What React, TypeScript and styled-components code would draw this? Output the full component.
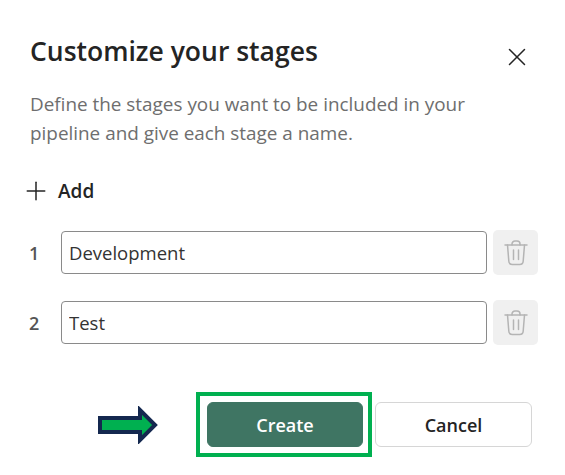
import styled, { createGlobalStyle } from "styled-components";
import { Plus, X } from "lucide-react";

const stages = [
  { id: 1, name: "Development" },
  { id: 2, name: "Test" },
];

const GlobalStyle = createGlobalStyle`
  html, body {
    margin: 0;
    padding: 0;
    background: #fff;
  }
  body {
    font-family: "Open Sans", "Noto Sans", "Liberation Sans", sans-serif;
  }
`;

const TrashIcon = () => (
  <svg width="24" height="26" viewBox="0 0 24 26" fill="none" stroke="#b4b4b4" strokeWidth="1.5" strokeLinecap="round" strokeLinejoin="round">
    <path d="M1 5h22" />
    <path d="M8 5V4a3 3 0 0 1 3-3h2a3 3 0 0 1 3 3v1" />
    <path d="M3.500 5l1.300 16a3.600 3.600 0 0 0 3.600 3.500h7.200a3.600 3.600 0 0 0 3.600-3.500L20.500 5" />
    <path d="M9.500 10v9.500M14.500 10v9.500" />
  </svg>
);

const App = () => {
  return (
    <Dialog>
      <GlobalStyle />
      <Header>
        <Title>Customize your stages</Title>
        <CloseButton aria-label="Close">
          <X size={30} strokeWidth={1.5} absoluteStrokeWidth />
        </CloseButton>
      </Header>
      <Description>
        Define the stages you want to be included in your pipeline and give each stage a name.
      </Description>
      <AddButton>
        <Plus size={30} strokeWidth={1.5} absoluteStrokeWidth />
        <span>Add</span>
      </AddButton>
      <StageList>
        {stages.map((stage) => (
          <StageRow key={stage.id}>
            <StageNumber>{stage.id}</StageNumber>
            <StageInput defaultValue={stage.name} />
            <DeleteButton aria-label="Delete" disabled>
              <TrashIcon />
            </DeleteButton>
          </StageRow>
        ))}
      </StageList>
      <Footer>
        <Arrow width="62" height="38" viewBox="0 0 62 38">
          <path d="M2 12h40V4l15 15-15 15v-8H2z" fill="#00b050" stroke="#14284f" strokeWidth="4" />
        </Arrow>
        <Highlight>
          <ActionButton $primary>Create</ActionButton>
        </Highlight>
        <ActionButton>Cancel</ActionButton>
      </Footer>
    </Dialog>
  );
};

const Dialog = styled.div`
  width: 565px;
  height: 475px;
  box-sizing: border-box;
  padding: 33px 27px 0 30px;
  overflow: hidden;
  background: #fff;
`;

const Header = styled.div`
  display: flex;
  justify-content: space-between;
  align-items: flex-start;
`;

const Title = styled.h1`
  margin: 0;
  font-size: 26.5px;
  line-height: 36px;
  font-weight: 600;
  color: #242424;
`;

const CloseButton = styled.button`
  display: flex;
  margin: 9px 6px 0 0;
  padding: 0;
  border: none;
  background: none;
  color: #242424;
`;

const Description = styled.p`
  width: 470px;
  margin: 18px 0 0;
  font-size: 18.9px;
  line-height: 29px;
  color: #6e6e6e;
`;

const AddButton = styled.button`
  display: flex;
  align-items: center;
  gap: 7px;
  margin: 27px 0 0 -9px;
  padding: 0;
  border: none;
  background: none;
  font-family: inherit;
  font-size: 19px;
  font-weight: 600;
  line-height: 32px;
  color: #242424;
`;

const StageList = styled.div`
  display: flex;
  flex-direction: column;
  gap: 25px;
  margin-top: 23px;
`;

const StageRow = styled.div`
  display: flex;
  align-items: center;
`;

const StageNumber = styled.span`
  width: 32px;
  margin-left: -1px;
  font-size: 18px;
  font-weight: 600;
  color: #555;
`;

const StageInput = styled.input`
  width: 426px;
  height: 43px;
  box-sizing: border-box;
  padding: 0 7px;
  border: 1px solid #8a8a8a;
  border-radius: 4px;
  outline: none;
  font-family: inherit;
  font-size: 18.5px;
  color: #333;
`;

const DeleteButton = styled.button`
  display: flex;
  align-items: center;
  justify-content: center;
  width: 45px;
  height: 45px;
  margin-left: 6px;
  padding: 0;
  border: none;
  border-radius: 5px;
  background: #f0f0f0;
`;

const Footer = styled.div`
  display: flex;
  align-items: center;
  margin-top: 47px;
  margin-left: 68px;
`;

const Arrow = styled.svg`
  flex-shrink: 0;
  margin-right: 36px;
`;

const Highlight = styled.div`
  display: flex;
  padding: 6px 5px 6px 7px;
  border: 4px solid #00b050;
  margin-right: 3px;

  button {
    width: 156px;
  }
`;

const ActionButton = styled.button<{ $primary?: boolean }>`
  width: 157px;
  height: 45px;
  padding: 0;
  border: 1px solid ${({ $primary }) => ($primary ? "#3f7563" : "#d6d6d6")};
  border-radius: 6px;
  background: ${({ $primary }) => ($primary ? "#3f7563" : "#fff")};
  font-family: inherit;
  font-size: 18px;
  font-weight: 600;
  color: ${({ $primary }) => ($primary ? "#fff" : "#242424")};
`;

export default App;
